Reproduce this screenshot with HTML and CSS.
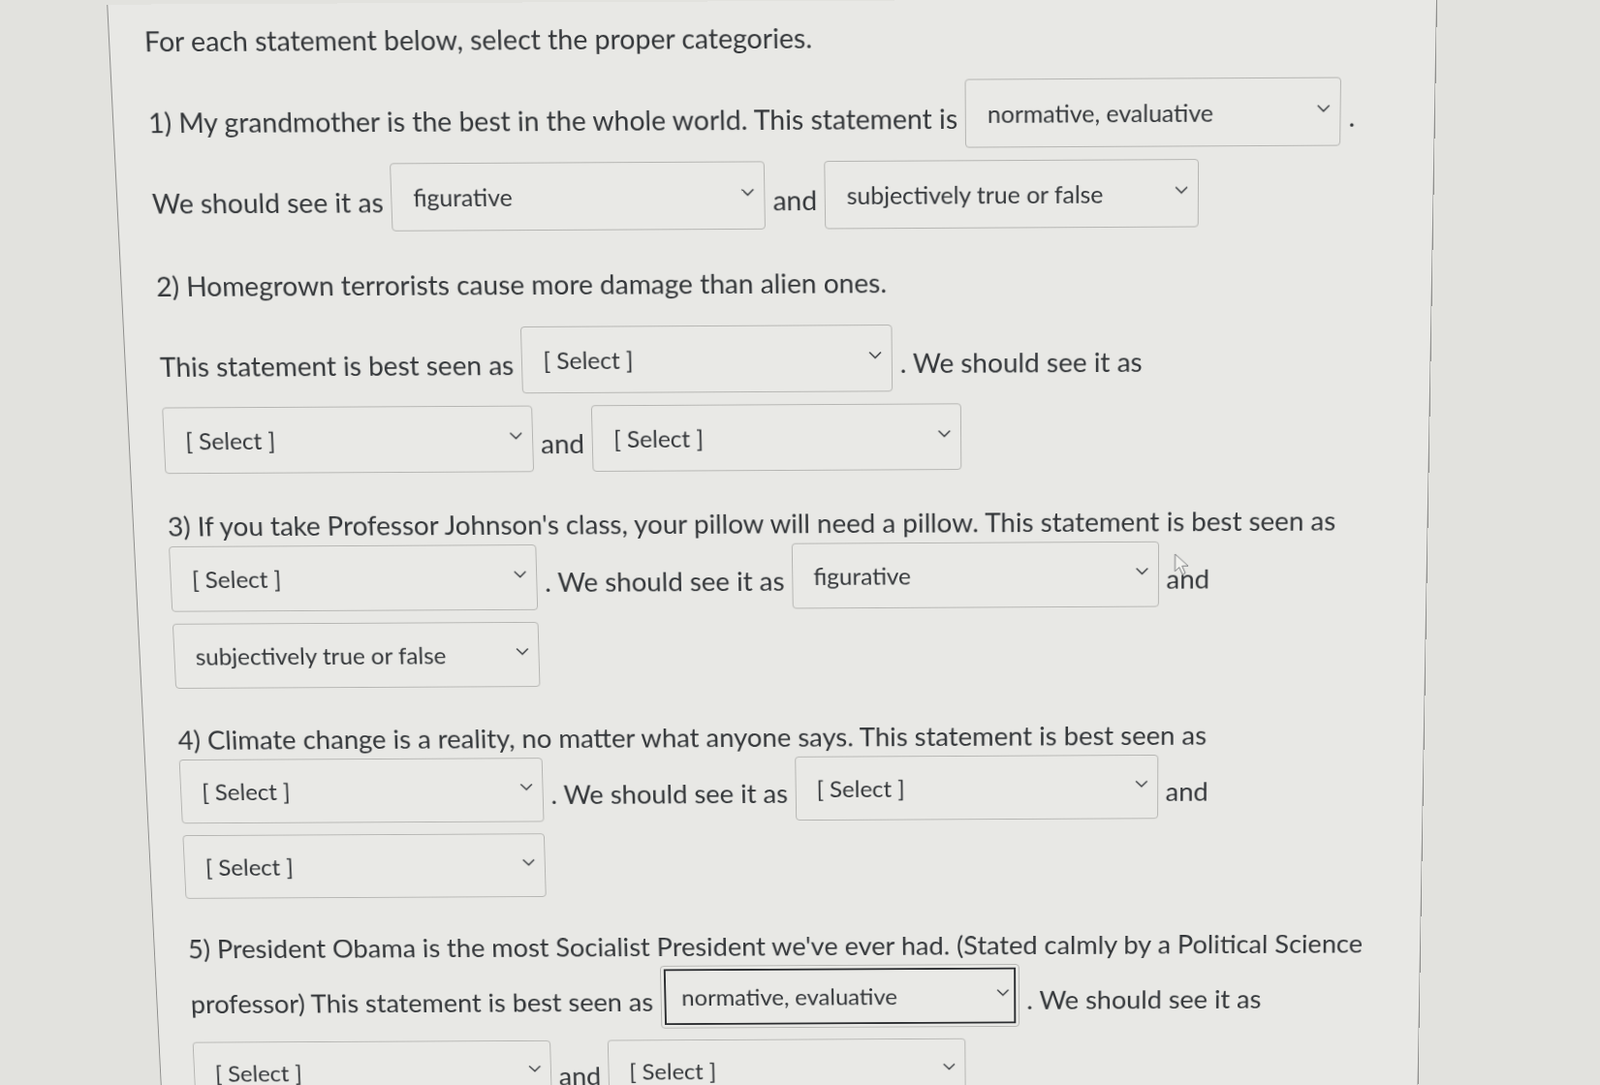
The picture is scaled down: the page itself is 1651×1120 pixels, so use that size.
FILE: index.html
```html
<!DOCTYPE html>
<html lang="en">
<head>
  <meta charset="UTF-8">
  <title>Quiz – Statement categories</title>
  <link rel="stylesheet" href="styles.css">
</head>
<body>

<div class="screen">
  <div class="panel">
    <p class="intro">For each statement below, select the proper categories.</p>

    <div class="question">
      <div class="line">
        <span class="label">1) My grandmother is the best in the whole world. This statement is</span>
        <span class="dropdown">
          <select><option>normative, evaluative</option></select>
          <svg viewBox="0 0 14 9"><path d="M1 1.5 L7 7.5 L13 1.5"/></svg>
        </span>
        <span class="label">.</span>
      </div>
      <div class="line">
        <span class="label">We should see it as</span>
        <span class="dropdown">
          <select><option>figurative</option></select>
          <svg viewBox="0 0 14 9"><path d="M1 1.5 L7 7.5 L13 1.5"/></svg>
        </span>
        <span class="label">and</span>
        <span class="dropdown">
          <select><option>subjectively true or false</option></select>
          <svg viewBox="0 0 14 9"><path d="M1 1.5 L7 7.5 L13 1.5"/></svg>
        </span>
      </div>
    </div>

    <div class="question">
      <p class="statement solo">2) Homegrown terrorists cause more damage than alien ones.</p>
      <div class="line">
        <span class="label">This statement is best seen as</span>
        <span class="dropdown">
          <select><option>[ Select ]</option></select>
          <svg viewBox="0 0 14 9"><path d="M1 1.5 L7 7.5 L13 1.5"/></svg>
        </span>
        <span class="label">. We should see it as</span>
      </div>
      <div class="line">
        <span class="dropdown">
          <select><option>[ Select ]</option></select>
          <svg viewBox="0 0 14 9"><path d="M1 1.5 L7 7.5 L13 1.5"/></svg>
        </span>
        <span class="label">and</span>
        <span class="dropdown">
          <select><option>[ Select ]</option></select>
          <svg viewBox="0 0 14 9"><path d="M1 1.5 L7 7.5 L13 1.5"/></svg>
        </span>
      </div>
    </div>

    <div class="question">
      <p class="statement">3) If you take Professor Johnson's class, your pillow will need a pillow. This statement is best seen as</p>
      <div class="line">
        <span class="dropdown">
          <select><option>[ Select ]</option></select>
          <svg viewBox="0 0 14 9"><path d="M1 1.5 L7 7.5 L13 1.5"/></svg>
        </span>
        <span class="label">. We should see it as</span>
        <span class="dropdown">
          <select><option>figurative</option></select>
          <svg viewBox="0 0 14 9"><path d="M1 1.5 L7 7.5 L13 1.5"/></svg>
        </span>
        <span class="label pointer-host">and
          <svg class="cursor" viewBox="0 0 18 26"><path d="M1 1 L1 20 L5.5 15.5 L9 23.5 L12 22 L8.6 14.2 L15 14.2 Z"/></svg>
        </span>
      </div>
      <div class="line">
        <span class="dropdown">
          <select><option>subjectively true or false</option></select>
          <svg viewBox="0 0 14 9"><path d="M1 1.5 L7 7.5 L13 1.5"/></svg>
        </span>
      </div>
    </div>

    <div class="question">
      <p class="statement">4) Climate change is a reality, no matter what anyone says. This statement is best seen as</p>
      <div class="line">
        <span class="dropdown">
          <select><option>[ Select ]</option></select>
          <svg viewBox="0 0 14 9"><path d="M1 1.5 L7 7.5 L13 1.5"/></svg>
        </span>
        <span class="label">. We should see it as</span>
        <span class="dropdown">
          <select><option>[ Select ]</option></select>
          <svg viewBox="0 0 14 9"><path d="M1 1.5 L7 7.5 L13 1.5"/></svg>
        </span>
        <span class="label">and</span>
      </div>
      <div class="line">
        <span class="dropdown">
          <select><option>[ Select ]</option></select>
          <svg viewBox="0 0 14 9"><path d="M1 1.5 L7 7.5 L13 1.5"/></svg>
        </span>
      </div>
    </div>

    <div class="question">
      <p class="statement">5) President Obama is the most Socialist President we've ever had. (Stated calmly by a Political Science</p>
      <div class="line">
        <span class="label">professor) This statement is best seen as</span>
        <span class="dropdown focused">
          <select><option>normative, evaluative</option></select>
          <svg viewBox="0 0 14 9"><path d="M1 1.5 L7 7.5 L13 1.5"/></svg>
        </span>
        <span class="label">. We should see it as</span>
      </div>
      <div class="line">
        <span class="dropdown">
          <select><option>[ Select ]</option></select>
          <svg viewBox="0 0 14 9"><path d="M1 1.5 L7 7.5 L13 1.5"/></svg>
        </span>
        <span class="label">and</span>
        <span class="dropdown">
          <select><option>[ Select ]</option></select>
          <svg viewBox="0 0 14 9"><path d="M1 1.5 L7 7.5 L13 1.5"/></svg>
        </span>
      </div>
    </div>
  </div>
</div>

</body>
</html>
```

FILE: styles.css
```css
* {
  box-sizing: border-box;
  margin: 0;
  padding: 0;
}

html,
body {
  height: 100%;
  overflow: hidden;
  background-color: #e2e2de;
}

body {
  font-family: 'Lato', 'Liberation Sans', sans-serif;
  color: #34373a;
}

/* the screen was photographed at a slight angle */
.screen {
  width: 1651px;
  height: 1320px;
  transform-origin: 1020px 0;
  transform: perspective(1500px) rotateX(-4.2deg) rotate(-0.3deg);
}

.panel {
  width: 1373px;
  height: 100%;
  margin-left: 110px;
  padding: 21px 0 0 36px;
  background-color: #e8e8e5;
  border-left: 1px solid #8e8e8c;
  border-right: 1px solid #8e8e8c;
}

.intro,
.statement,
.line {
  font-size: 28.5px;
  line-height: 34px;
  white-space: nowrap;
}

.question {
  margin-top: 40px;
}

.intro + .question {
  margin-top: 27px;
}

.line {
  display: flex;
  align-items: center;
}

.line + .line {
  margin-top: 13px;
}

.statement + .line {
  margin-top: 5px;
}

.statement.solo {
  margin-bottom: 28px;
}

.label {
  margin-top: 10px;
}

.dropdown {
  position: relative;
  flex: none;
  width: 390px;
  height: 72px;
  margin: 0 8px;
}

.dropdown:first-child {
  margin-left: 0;
}

.dropdown select {
  width: 100%;
  height: 100%;
  -webkit-appearance: none;
  appearance: none;
  padding: 0 44px 0 22px;
  font-family: 'Lato', 'Liberation Sans', sans-serif;
  font-size: 25px;
  color: #34373a;
  background-color: #e9e9e6;
  border: 1px solid #b5b5b2;
  border-radius: 4px;
}

.dropdown svg {
  position: absolute;
  right: 11px;
  top: 50%;
  width: 14px;
  height: 9px;
  margin-top: -8px;
  pointer-events: none;
}

.dropdown svg path {
  fill: none;
  stroke: #45484b;
  stroke-width: 1.7;
}

.dropdown.focused select {
  outline: 2px solid #2b2d30;
  outline-offset: -6px;
}

/* mouse pointer caught in the photo */
.pointer-host {
  position: relative;
}

.cursor {
  position: absolute;
  left: 8px;
  top: -11px;
  width: 18px;
  height: 26px;
}

.cursor path {
  fill: rgba(250, 250, 248, 0.55);
  stroke: #77797b;
  stroke-width: 1;
}
```
